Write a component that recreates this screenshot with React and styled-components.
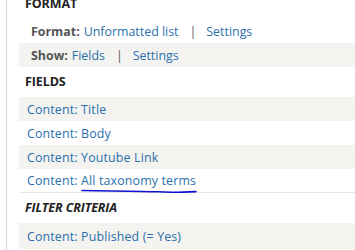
import styled, { createGlobalStyle } from 'styled-components';

const GlobalStyle = createGlobalStyle`
  html, body {
    margin: 0;
    padding: 0;
    background: #fff;
    overflow: hidden;
  }
  body {
    font-family: 'Open Sans', 'Noto Sans', sans-serif;
    font-size: 12.4px;
    color: #333;
  }
`;

const fields = ['Content: Title', 'Content: Body', 'Content: Youtube Link'];

export default function App() {
  return (
    <>
      <GlobalStyle />
      <Page>
        <Column>
          <Heading $first>FORMAT</Heading>
          <OptionRow>
            <Label>Format:</Label>
            <Link>Unformatted list</Link>
            <Pipe>|</Pipe>
            <Link>Settings</Link>
          </OptionRow>
          <OptionRow $shade>
            <Label>Show:</Label>
            <Link>Fields</Link>
            <Pipe>|</Pipe>
            <Link>Settings</Link>
          </OptionRow>

          <Heading>FIELDS</Heading>
          {fields.map((f, i) => (
            <FieldRow key={f} $shade={i % 2 === 0}>
              <Link $wide>{f}</Link>
            </FieldRow>
          ))}
          <FieldRow $border>
            <Link $wide>
              Content: <Marked>All taxonomy terms
                <Scribble viewBox="0 0 118 5" preserveAspectRatio="none">
                  <path d="M1 1.5 C 30 2, 60 2.2, 78 2.8 C 88 3.6, 100 3.4, 117 2.6" />
                </Scribble>
              </Marked>
            </Link>
          </FieldRow>

          <Heading $italic>FILTER CRITERIA</Heading>
          <FieldRow $shade $tall>
            <Link $wide>Content: Published (= Yes)</Link>
          </FieldRow>
        </Column>
      </Page>
    </>
  );
}

const Page = styled.div`
  width: 355px;
  height: 250px;
  overflow: hidden;
  padding-left: 6px;
  box-sizing: border-box;
`;

const Column = styled.div`
  border-left: 1px solid #d4d4d4;
  padding-left: 12px;
  height: 100%;
  display: flex;
  flex-direction: column;
`;

const Heading = styled.h3`
  margin: ${p => (p.$first ? '-11px' : '0')} 0 0;
  padding-left: 6px;
  height: 30px;
  line-height: 30px;
  font-size: 12.5px;
  font-weight: 700;
  font-style: ${p => (p.$italic ? 'italic' : 'normal')};
  color: #222;
  letter-spacing: -0.1px;
`;

const OptionRow = styled.div`
  display: flex;
  align-items: center;
  height: 24px;
  padding-left: 12px;
  background: ${p => (p.$shade ? '#f3f3ef' : '#fff')};
`;

const Label = styled.span`
  font-weight: 700;
  color: #555;
  margin-right: 4px;
`;

const Pipe = styled.span`
  color: #555;
  margin: 0 10px 0 11px;
`;

const FieldRow = styled.div`
  display: flex;
  align-items: center;
  height: ${p => (p.$tall ? '26px' : '24px')};
  padding-left: 8px;
  background: ${p => (p.$shade ? '#f3f3ef' : '#fff')};
  border-bottom: ${p => (p.$border ? '1px solid #e9e9e9' : 'none')};
  box-sizing: border-box;
`;

const Link = styled.span`
  color: #2a6fac;
  white-space: pre;
  letter-spacing: ${p => (p.$wide ? '0.15px' : '0')};
`;

const Marked = styled.span`
  position: relative;
`;

const Scribble = styled.svg`
  position: absolute;
  left: 0;
  top: 17px;
  width: 116px;
  height: 5px;
  overflow: visible;

  path {
    fill: none;
    stroke: #1010d0;
    stroke-width: 1.6;
    stroke-linecap: round;
  }
`;
